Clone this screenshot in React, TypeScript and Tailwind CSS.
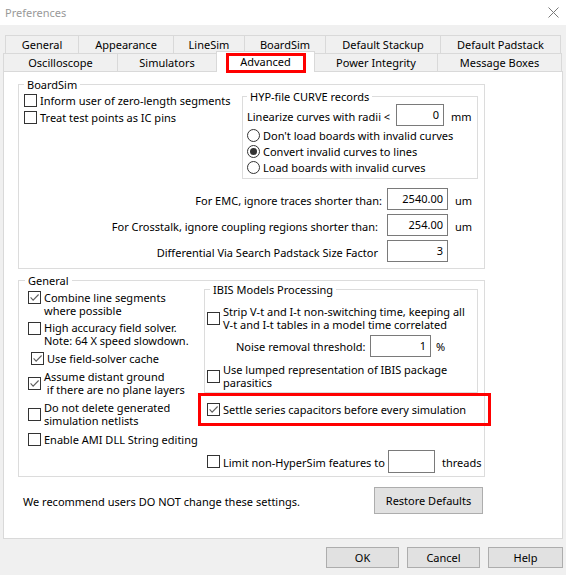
import React from "react";

const Check = ({ checked = false }: { checked?: boolean }) => (
  <span className="flex h-[13px] w-[13px] shrink-0 items-center justify-center border border-[#333333] bg-white">
    {checked && (
      <svg width="11" height="11" viewBox="0 0 11 11" fill="none">
        <path d="M1.6 5.4L4.1 8.1L9.6 2.5" stroke="#5e5e5e" strokeWidth="1.1" />
      </svg>
    )}
  </span>
);

const Radio = ({ on = false }: { on?: boolean }) => (
  <svg width="13" height="13" viewBox="0 0 13 13" className="shrink-0">
    <circle cx="6.5" cy="6.5" r="6" fill="#ffffff" stroke="#333333" />
    {on && <circle cx="6.5" cy="6.5" r="3.5" fill="#333333" />}
  </svg>
);

const Field = ({ value = "", className }: { value?: string; className: string }) => (
  <div
    className={
      "flex shrink-0 items-center justify-end border border-[#7a7a7a] bg-white pr-[4px] pb-[2px] " + className
    }
  >
    {value}
  </div>
);

const Btn = ({ label, className }: { label: string; className: string }) => (
  <div
    className={
      "flex shrink-0 items-center justify-center border border-[#adadad] bg-[#e1e1e1] pb-[1px] " + className
    }
  >
    {label}
  </div>
);

const topRow: [string, string][] = [
  ["General", "w-[73px]"],
  ["Appearance", "w-[95px]"],
  ["LineSim", "w-[71px]"],
  ["BoardSim", "w-[81px]"],
  ["Default Stackup", "w-[115px]"],
  ["Default Padstack", "w-[121px] border-r"],
];

export default function App() {
  return (
    <div className="flex h-[575px] w-[566px] flex-col overflow-hidden whitespace-nowrap bg-[#f0f0f0] font-['Noto_Sans',sans-serif] text-[11px] leading-[13px] text-black">
      {/* caption */}
      <div className="flex h-[25px] shrink-0 items-center justify-between bg-white pl-[5px] pr-[7px]">
        <span className="pb-[1px] text-[#999999]">Preferences</span>
        <svg width="11" height="11" viewBox="0 0 11 11">
          <path d="M0.5 0.5L10.5 10.5M10.5 0.5L0.5 10.5" stroke="#7a7a7a" strokeWidth="1" />
        </svg>
      </div>

      {/* tab strip */}
      <div className="mt-[10px] flex flex-col">
        <div className="ml-[5px] flex h-[18px] w-[556px]">
          {topRow.map(([t, w]) => (
            <div
              key={t}
              className={"flex items-center justify-center border-l border-t border-[#d9d9d9] pb-[1px] " + w}
            >
              {t}
            </div>
          ))}
        </div>
        <div className="ml-[3px] flex h-[18px] w-[560px]">
          <div className="flex w-[114px] items-center justify-center border-l border-t border-[#d9d9d9]">
            Oscilloscope
          </div>
          <div className="flex w-[99px] items-center justify-center border-l border-t border-[#d9d9d9]">
            Simulators
          </div>
          <div className="relative z-10 -mr-[1px] -mt-[2px] flex h-[21px] w-[99px] shrink-0 items-center justify-center border-x border-t border-[#d9d9d9] bg-white pb-[2px]">
            Advanced
            <div className="absolute left-[9px] top-[1px] h-[20px] w-[80px] border-[3px] border-[#ff0000]" />
          </div>
          <div className="flex w-[123px] items-center justify-center border-l border-t border-[#d9d9d9]">
            Power Integrity
          </div>
          <div className="flex w-[125px] items-center justify-center border-x border-t border-[#d9d9d9]">
            Message Boxes
          </div>
        </div>
      </div>

      {/* page */}
      <div className="ml-[3px] flex h-[468px] w-[560px] shrink-0 flex-col border border-[#d9d9d9] bg-white">
        {/* BoardSim */}
        <fieldset className="ml-[14px] mt-[6px] w-[467px] border border-[#dcdcdc] pb-[4px] pl-[5px]">
          <legend className="px-[3px] leading-[13px]">BoardSim</legend>
          <div className="flex items-start">
            <div className="w-[218px] pt-[1px]">
              <div className="flex h-[17px] items-center gap-[3px]">
                <Check />
                <span>Inform user of zero-length segments</span>
              </div>
              <div className="flex h-[17px] items-center gap-[3px]">
                <Check />
                <span>Treat test points as IC pins</span>
              </div>
            </div>
            <fieldset className="-mt-[1px] w-[236px] border border-[#dcdcdc] pb-[3px] pl-[4px]">
              <legend className="px-[3px] leading-[13px]">HYP-file CURVE records</legend>
              <div className="flex h-[24px] items-center">
                <span className="w-[149px] pt-[2px]">Linearize curves with radii &lt;</span>
                <Field value="0" className="h-[22px] w-[48px]" />
                <span className="ml-[7px] pt-[2px]">mm</span>
              </div>
              <div className="flex h-[16px] items-center gap-[3px]">
                <Radio />
                <span>Don't load boards with invalid curves</span>
              </div>
              <div className="flex h-[16px] items-center gap-[3px]">
                <Radio on />
                <span>Convert invalid curves to lines</span>
              </div>
              <div className="flex h-[16px] items-center gap-[3px]">
                <Radio />
                <span>Load boards with invalid curves</span>
              </div>
            </fieldset>
          </div>
          <div className="mt-[7px]">
            <div className="flex h-[26px] items-center">
              <span className="flex-1 pr-[5px] pt-[2px] text-right">For EMC, ignore traces shorter than:</span>
              <Field value="2540.00" className="h-[22px] w-[61px]" />
              <span className="w-[36px] pl-[7px] pt-[2px]">um</span>
            </div>
            <div className="flex h-[26px] items-center">
              <span className="flex-1 pr-[9px] pt-[2px] text-right">
                For Crosstalk, ignore coupling regions shorter than:
              </span>
              <Field value="254.00" className="h-[22px] w-[61px]" />
              <span className="w-[36px] pl-[7px] pt-[2px]">um</span>
            </div>
            <div className="flex h-[26px] items-center">
              <span className="flex-1 pr-[9px] pt-[2px] text-right">Differential Via Search Padstack Size Factor</span>
              <Field value="3" className="h-[22px] w-[61px]" />
              <span className="w-[36px]" />
            </div>
          </div>
        </fieldset>

        {/* General */}
        <fieldset className="ml-[14px] mt-[5px] w-[467px] border border-[#dcdcdc] pb-[3px] pl-[6px]">
          <legend className="px-[3px] leading-[13px]">General</legend>
          <div className="flex items-start">
            <div className="flex w-[179px] flex-col pl-[3px]">
              <div className="mt-[4px] flex items-start gap-[3px]">
                <Check checked />
                <span>
                  Combine line segments
                  <br />
                  where possible
                </span>
              </div>
              <div className="mt-[4px] flex items-start gap-[3px]">
                <span className="mt-[1px]">
                  <Check />
                </span>
                <span>
                  High accuracy field solver.
                  <br />
                  Note: 64 X speed slowdown.
                </span>
              </div>
              <div className="ml-[3px] mt-[5px] flex h-[13px] items-center gap-[3px]">
                <Check checked />
                <span>Use field-solver cache</span>
              </div>
              <div className="mt-[5px] flex items-center gap-[3px]">
                <Check checked />
                <span>
                  Assume distant ground
                  <br />
                  {"\u00a0if there are no plane layers"}
                </span>
              </div>
              <div className="mt-[5px] flex items-center gap-[3px]">
                <Check />
                <span>
                  Do not delete generated
                  <br />
                  simulation netlists
                </span>
              </div>
              <div className="mt-[6px] flex h-[13px] items-center gap-[3px]">
                <Check />
                <span>Enable AMI DLL String editing</span>
              </div>
            </div>

            <div className="-mt-[4px] flex w-[274px] flex-col">
              <fieldset className="w-[274px] border border-[#dcdcdc] pb-[3px] pl-[2px]">
                <legend className="ml-[3px] px-[3px] leading-[13px]">IBIS Models Processing</legend>
                <div className="mt-[9px] flex items-center gap-[3px]">
                  <Check />
                  <span>
                    Strip V-t and I-t non-switching time, keeping all
                    <br />
                    V-t and I-t tables in a model time correlated
                  </span>
                </div>
                <div className="mt-[4px] flex h-[22px] items-center">
                  <span className="ml-[29px] w-[134px] pt-[1px]">Noise removal threshold:</span>
                  <Field value="1" className="h-[22px] w-[61px]" />
                  <span className="ml-[5px] pt-[1px]">%</span>
                </div>
                <div className="mt-[6px] flex items-center gap-[3px]">
                  <Check />
                  <span>
                    Use lumped representation of IBIS package
                    <br />
                    parasitics
                  </span>
                </div>
              </fieldset>
              <div className="relative mt-[10px] flex h-[13px] items-center gap-[3px] pl-[3px]">
                <Check checked />
                <span>Settle series capacitors before every simulation</span>
                <div className="absolute -left-[6px] -top-[10px] h-[33px] w-[293px] border-[3px] border-[#ff0000]" />
              </div>
              <div className="mt-[34px] flex h-[23px] items-center pl-[3px]">
                <Check />
                <span className="ml-[3px] w-[165px] shrink-0 pt-[1px]">Limit non-HyperSim features to</span>
                <Field className="h-[23px] w-[47px]" />
                <span className="ml-[7px] pt-[2px]">threads</span>
              </div>
            </div>
          </div>
        </fieldset>

        <div className="mt-[10px] flex h-[27px] items-center">
          <span className="w-[370px] pl-[19px] pt-[1px]">We recommend users DO NOT change these settings.</span>
          <Btn label="Restore Defaults" className="h-[27px] w-[109px]" />
        </div>
      </div>

      {/* dialog buttons */}
      <div className="mt-[8px] flex justify-end gap-[8px] pr-[3px]">
        <Btn label="OK" className="h-[21px] w-[73px]" />
        <Btn label="Cancel" className="h-[21px] w-[73px]" />
        <Btn label="Help" className="h-[21px] w-[75px]" />
      </div>
    </div>
  );
}
